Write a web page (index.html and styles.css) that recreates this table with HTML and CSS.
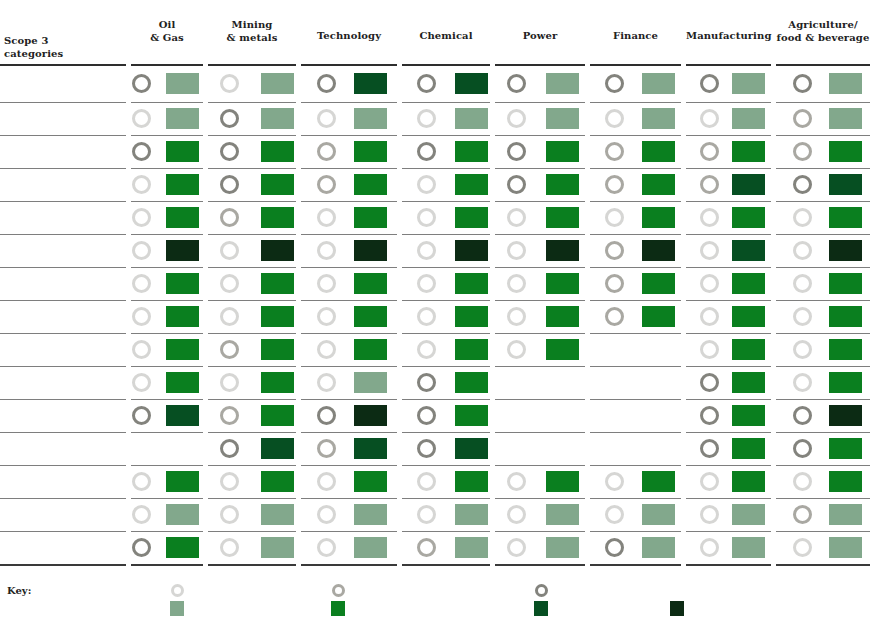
FILE: index.html
```html
<!DOCTYPE html>
<html lang="en">
<head>
<meta charset="utf-8">
<title>Scope 3 categories by sector</title>
<link rel="stylesheet" href="styles.css">
</head>
<body>
<div class="chart">
  <div class="row head">
    <div class="hcell label">Scope 3<br>categories</div>
    <div class="hcell two">Oil<br>&amp; Gas</div>
    <div class="hcell two">Mining<br>&amp; metals</div>
    <div class="hcell one">Technology</div>
    <div class="hcell one">Chemical</div>
    <div class="hcell one">Power</div>
    <div class="hcell one">Finance</div>
    <div class="hcell one">Manufacturing</div>
    <div class="hcell two">Agriculture/<br>food &amp; beverage</div>
  </div>

  <div class="row first">
    <div class="cell"></div>
    <div class="cell oil"><span class="ring d"></span><span class="sq s1"></span></div>
    <div class="cell min"><span class="ring l"></span><span class="sq s1"></span></div>
    <div class="cell tech"><span class="ring d"></span><span class="sq s3"></span></div>
    <div class="cell chem"><span class="ring d"></span><span class="sq s3"></span></div>
    <div class="cell pow"><span class="ring d"></span><span class="sq s1"></span></div>
    <div class="cell fin"><span class="ring d"></span><span class="sq s1"></span></div>
    <div class="cell man"><span class="ring d"></span><span class="sq s1"></span></div>
    <div class="cell agr"><span class="ring d"></span><span class="sq s1"></span></div>
  </div>

  <div class="row">
    <div class="cell"></div>
    <div class="cell oil"><span class="ring l"></span><span class="sq s1"></span></div>
    <div class="cell min"><span class="ring d"></span><span class="sq s1"></span></div>
    <div class="cell tech"><span class="ring l"></span><span class="sq s1"></span></div>
    <div class="cell chem"><span class="ring l"></span><span class="sq s1"></span></div>
    <div class="cell pow"><span class="ring l"></span><span class="sq s1"></span></div>
    <div class="cell fin"><span class="ring l"></span><span class="sq s1"></span></div>
    <div class="cell man"><span class="ring l"></span><span class="sq s1"></span></div>
    <div class="cell agr"><span class="ring m"></span><span class="sq s1"></span></div>
  </div>

  <div class="row">
    <div class="cell"></div>
    <div class="cell oil"><span class="ring d"></span><span class="sq s2"></span></div>
    <div class="cell min"><span class="ring d"></span><span class="sq s2"></span></div>
    <div class="cell tech"><span class="ring m"></span><span class="sq s2"></span></div>
    <div class="cell chem"><span class="ring d"></span><span class="sq s2"></span></div>
    <div class="cell pow"><span class="ring d"></span><span class="sq s2"></span></div>
    <div class="cell fin"><span class="ring m"></span><span class="sq s2"></span></div>
    <div class="cell man"><span class="ring m"></span><span class="sq s2"></span></div>
    <div class="cell agr"><span class="ring m"></span><span class="sq s2"></span></div>
  </div>

  <div class="row">
    <div class="cell"></div>
    <div class="cell oil"><span class="ring l"></span><span class="sq s2"></span></div>
    <div class="cell min"><span class="ring d"></span><span class="sq s2"></span></div>
    <div class="cell tech"><span class="ring m"></span><span class="sq s2"></span></div>
    <div class="cell chem"><span class="ring l"></span><span class="sq s2"></span></div>
    <div class="cell pow"><span class="ring d"></span><span class="sq s2"></span></div>
    <div class="cell fin"><span class="ring m"></span><span class="sq s2"></span></div>
    <div class="cell man"><span class="ring m"></span><span class="sq s3"></span></div>
    <div class="cell agr"><span class="ring d"></span><span class="sq s3"></span></div>
  </div>

  <div class="row">
    <div class="cell"></div>
    <div class="cell oil"><span class="ring l"></span><span class="sq s2"></span></div>
    <div class="cell min"><span class="ring m"></span><span class="sq s2"></span></div>
    <div class="cell tech"><span class="ring l"></span><span class="sq s2"></span></div>
    <div class="cell chem"><span class="ring l"></span><span class="sq s2"></span></div>
    <div class="cell pow"><span class="ring l"></span><span class="sq s2"></span></div>
    <div class="cell fin"><span class="ring l"></span><span class="sq s2"></span></div>
    <div class="cell man"><span class="ring l"></span><span class="sq s2"></span></div>
    <div class="cell agr"><span class="ring l"></span><span class="sq s2"></span></div>
  </div>

  <div class="row">
    <div class="cell"></div>
    <div class="cell oil"><span class="ring l"></span><span class="sq s4"></span></div>
    <div class="cell min"><span class="ring l"></span><span class="sq s4"></span></div>
    <div class="cell tech"><span class="ring l"></span><span class="sq s4"></span></div>
    <div class="cell chem"><span class="ring l"></span><span class="sq s4"></span></div>
    <div class="cell pow"><span class="ring l"></span><span class="sq s4"></span></div>
    <div class="cell fin"><span class="ring m"></span><span class="sq s4"></span></div>
    <div class="cell man"><span class="ring l"></span><span class="sq s3"></span></div>
    <div class="cell agr"><span class="ring l"></span><span class="sq s4"></span></div>
  </div>

  <div class="row">
    <div class="cell"></div>
    <div class="cell oil"><span class="ring l"></span><span class="sq s2"></span></div>
    <div class="cell min"><span class="ring l"></span><span class="sq s2"></span></div>
    <div class="cell tech"><span class="ring l"></span><span class="sq s2"></span></div>
    <div class="cell chem"><span class="ring l"></span><span class="sq s2"></span></div>
    <div class="cell pow"><span class="ring l"></span><span class="sq s2"></span></div>
    <div class="cell fin"><span class="ring m"></span><span class="sq s2"></span></div>
    <div class="cell man"><span class="ring l"></span><span class="sq s2"></span></div>
    <div class="cell agr"><span class="ring l"></span><span class="sq s2"></span></div>
  </div>

  <div class="row">
    <div class="cell"></div>
    <div class="cell oil"><span class="ring l"></span><span class="sq s2"></span></div>
    <div class="cell min"><span class="ring l"></span><span class="sq s2"></span></div>
    <div class="cell tech"><span class="ring l"></span><span class="sq s2"></span></div>
    <div class="cell chem"><span class="ring l"></span><span class="sq s2"></span></div>
    <div class="cell pow"><span class="ring l"></span><span class="sq s2"></span></div>
    <div class="cell fin"><span class="ring m"></span><span class="sq s2"></span></div>
    <div class="cell man"><span class="ring l"></span><span class="sq s2"></span></div>
    <div class="cell agr"><span class="ring l"></span><span class="sq s2"></span></div>
  </div>

  <div class="row">
    <div class="cell"></div>
    <div class="cell oil"><span class="ring l"></span><span class="sq s2"></span></div>
    <div class="cell min"><span class="ring m"></span><span class="sq s2"></span></div>
    <div class="cell tech"><span class="ring l"></span><span class="sq s2"></span></div>
    <div class="cell chem"><span class="ring l"></span><span class="sq s2"></span></div>
    <div class="cell pow"><span class="ring l"></span><span class="sq s2"></span></div>
    <div class="cell fin"></div>
    <div class="cell man"><span class="ring l"></span><span class="sq s2"></span></div>
    <div class="cell agr"><span class="ring l"></span><span class="sq s2"></span></div>
  </div>

  <div class="row">
    <div class="cell"></div>
    <div class="cell oil"><span class="ring l"></span><span class="sq s2"></span></div>
    <div class="cell min"><span class="ring l"></span><span class="sq s2"></span></div>
    <div class="cell tech"><span class="ring l"></span><span class="sq s1"></span></div>
    <div class="cell chem"><span class="ring d"></span><span class="sq s2"></span></div>
    <div class="cell pow"></div>
    <div class="cell fin"></div>
    <div class="cell man"><span class="ring d"></span><span class="sq s2"></span></div>
    <div class="cell agr"><span class="ring l"></span><span class="sq s2"></span></div>
  </div>

  <div class="row">
    <div class="cell"></div>
    <div class="cell oil"><span class="ring d"></span><span class="sq s3"></span></div>
    <div class="cell min"><span class="ring m"></span><span class="sq s2"></span></div>
    <div class="cell tech"><span class="ring d"></span><span class="sq s4"></span></div>
    <div class="cell chem"><span class="ring d"></span><span class="sq s2"></span></div>
    <div class="cell pow"></div>
    <div class="cell fin"></div>
    <div class="cell man"><span class="ring d"></span><span class="sq s2"></span></div>
    <div class="cell agr"><span class="ring d"></span><span class="sq s4"></span></div>
  </div>

  <div class="row">
    <div class="cell"></div>
    <div class="cell oil"></div>
    <div class="cell min"><span class="ring d"></span><span class="sq s3"></span></div>
    <div class="cell tech"><span class="ring m"></span><span class="sq s3"></span></div>
    <div class="cell chem"><span class="ring d"></span><span class="sq s3"></span></div>
    <div class="cell pow"></div>
    <div class="cell fin"></div>
    <div class="cell man"><span class="ring d"></span><span class="sq s2"></span></div>
    <div class="cell agr"><span class="ring d"></span><span class="sq s2"></span></div>
  </div>

  <div class="row">
    <div class="cell"></div>
    <div class="cell oil"><span class="ring l"></span><span class="sq s2"></span></div>
    <div class="cell min"><span class="ring l"></span><span class="sq s2"></span></div>
    <div class="cell tech"><span class="ring l"></span><span class="sq s2"></span></div>
    <div class="cell chem"><span class="ring l"></span><span class="sq s2"></span></div>
    <div class="cell pow"><span class="ring l"></span><span class="sq s2"></span></div>
    <div class="cell fin"><span class="ring l"></span><span class="sq s2"></span></div>
    <div class="cell man"><span class="ring l"></span><span class="sq s2"></span></div>
    <div class="cell agr"><span class="ring l"></span><span class="sq s2"></span></div>
  </div>

  <div class="row">
    <div class="cell"></div>
    <div class="cell oil"><span class="ring l"></span><span class="sq s1"></span></div>
    <div class="cell min"><span class="ring l"></span><span class="sq s1"></span></div>
    <div class="cell tech"><span class="ring l"></span><span class="sq s1"></span></div>
    <div class="cell chem"><span class="ring l"></span><span class="sq s1"></span></div>
    <div class="cell pow"><span class="ring l"></span><span class="sq s1"></span></div>
    <div class="cell fin"><span class="ring l"></span><span class="sq s1"></span></div>
    <div class="cell man"><span class="ring l"></span><span class="sq s1"></span></div>
    <div class="cell agr"><span class="ring m"></span><span class="sq s1"></span></div>
  </div>

  <div class="row last">
    <div class="cell"></div>
    <div class="cell oil"><span class="ring d"></span><span class="sq s2"></span></div>
    <div class="cell min"><span class="ring l"></span><span class="sq s1"></span></div>
    <div class="cell tech"><span class="ring l"></span><span class="sq s1"></span></div>
    <div class="cell chem"><span class="ring m"></span><span class="sq s1"></span></div>
    <div class="cell pow"><span class="ring l"></span><span class="sq s1"></span></div>
    <div class="cell fin"><span class="ring d"></span><span class="sq s1"></span></div>
    <div class="cell man"><span class="ring l"></span><span class="sq s1"></span></div>
    <div class="cell agr"><span class="ring l"></span><span class="sq s1"></span></div>
  </div>
</div>

<div class="key">
  <div class="key-label">Key:</div>
  <div class="kitem"><span class="kring l"></span><span class="ksq s1"></span></div>
  <div class="kitem"><span class="kring m"></span><span class="ksq s2"></span></div>
  <div class="kitem"><span class="kring d"></span><span class="ksq s3"></span></div>
  <div class="kitem"><span class="kring none"></span><span class="ksq s4"></span></div>
</div>
</body>
</html>
```

FILE: styles.css
```css
* { box-sizing: border-box; }

html, body {
  margin: 0;
  padding: 0;
  background: #ffffff;
}

body {
  width: 870px;
  height: 631px;
  overflow: hidden;
  font-family: "DejaVu Serif", "Liberation Serif", serif;
  color: #222222;
}

.row {
  display: grid;
  grid-template-columns: 126px 72px 88px 96px 88px 90px 91px 85px 94px;
  column-gap: 5px;
}

/* header */
.hcell {
  height: 66px;
  border-bottom: 2px solid #2e2e2e;
  font-size: 10px;
  font-weight: bold;
  line-height: 13px;
  text-align: center;
  letter-spacing: 0.1px;
}
.hcell.two { padding-top: 18px; }
.hcell.one { padding-top: 29px; }
.hcell.label {
  text-align: left;
  padding-top: 34px;
  padding-left: 4px;
}

/* body cells */
.cell {
  display: flex;
  align-items: center;
  justify-content: space-between;
  height: 33px;
  padding-top: 5px;
  padding-bottom: 6px;
  border-bottom: 1px solid #7e7e7e;
}
.row.first .cell {
  height: 37px;
  padding-top: 7px;
  padding-bottom: 8px;
}
.row.last .cell {
  height: 34px;
  border-bottom: 2px solid #3a3a3a;
}

.oil  { padding-left: 1px;  padding-right: 4px; }
.min  { padding-left: 12px; padding-right: 2px; }
.tech { padding-left: 16px; padding-right: 10px; }
.chem { padding-left: 15px; padding-right: 2px; }
.pow  { padding-left: 12px; padding-right: 6px; }
.fin  { padding-left: 15px; padding-right: 6px; }
.man  { padding-left: 14px; padding-right: 6px; }
.agr  { padding-left: 17px; padding-right: 8px; }

.ring {
  width: 19px;
  height: 19px;
  border-radius: 50%;
  border: 3.5px solid #d4d4d4;
}
.ring.l, .kring.l { border-color: #d6d6d4; }
.ring.m, .kring.m { border-color: #a9a8a2; }
.ring.d, .kring.d { border-color: #83837d; }

.sq {
  width: 33px;
  height: 21px;
}
.s1 { background: #82a88c; }
.s2 { background: #0a7f1f; }
.s3 { background: #064f22; }
.s4 { background: #0c2b14; }

/* key */
.key {
  display: grid;
  grid-template-columns: 170px 161px 203px 136px 1fr;
  padding-top: 18px;
}
.key-label {
  font-size: 10px;
  font-weight: bold;
  line-height: 13px;
  padding-left: 7px;
}
.kitem {
  display: flex;
  flex-direction: column;
  align-items: flex-start;
  gap: 4px;
}
.kring {
  width: 13px;
  height: 13px;
  margin-left: 1px;
  border-radius: 50%;
  border: 3px solid transparent;
}
.kring.none { border-color: transparent; }
.ksq {
  width: 14px;
  height: 15px;
}
```
